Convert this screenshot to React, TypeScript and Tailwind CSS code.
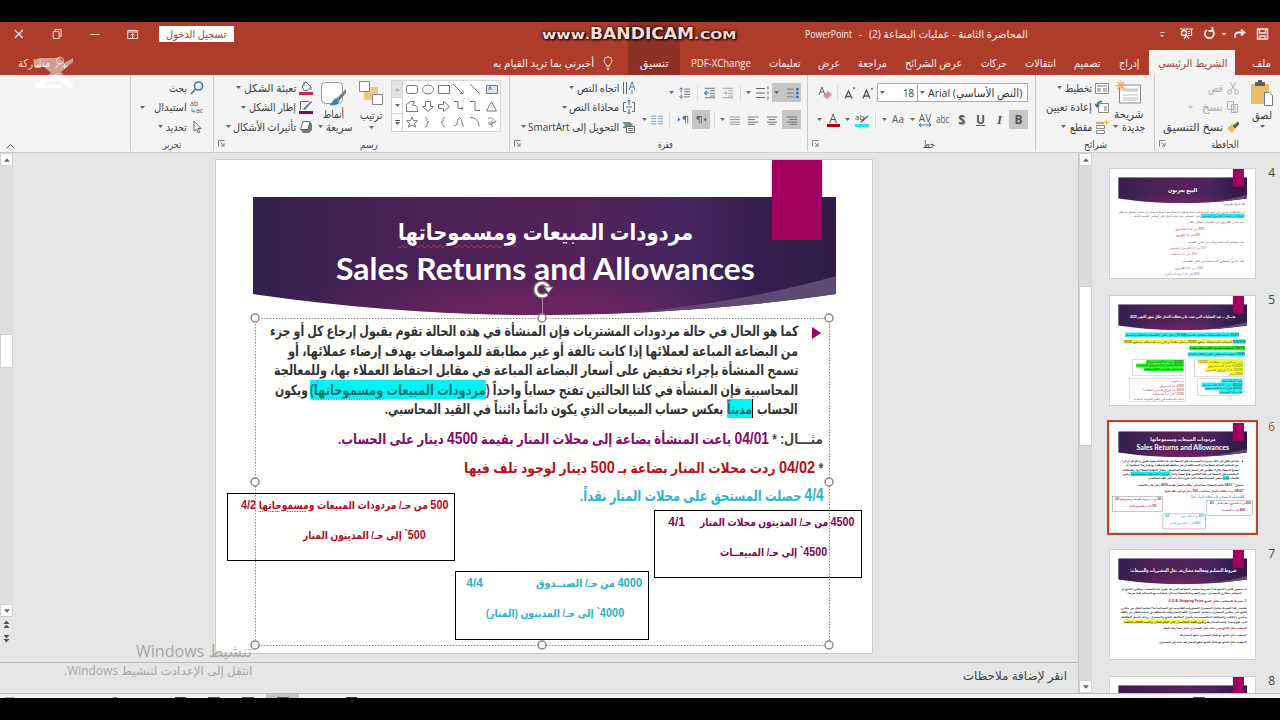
import { useLayoutEffect, useRef } from 'react';
import type { ReactNode } from 'react';

// One line of text, stretched to exactly fill the width of its box
const Fit = ({ className = '', children }: { className?: string; children: ReactNode }) => {
	const box = useRef<HTMLSpanElement>(null);
	const text = useRef<HTMLSpanElement>(null);

	useLayoutEffect(() => {
		if (!box.current || !text.current) return;
		text.current.style.transform = `scaleX(${box.current.clientWidth / text.current.offsetWidth})`;
	}, []);

	return (
		<span ref={box} className={`block shrink-0 ${className}`}>
			<span ref={text} className="inline-block origin-right whitespace-nowrap">
				{children}
			</span>
		</span>
	);
};

// Latin digits are set a little larger than the Arabic around them
const Num = ({ children }: { children: ReactNode }) => <span className="text-[1.18em] leading-none">{children}</span>;

const Caret = ({ className = '' }: { className?: string }) => (
	<svg viewBox="0 0 5 3" className={`h-[3px] w-[5px] shrink-0 fill-[#666] ${className}`}>
		<path d="M0 0h5L2.500 3z" />
	</svg>
);

const Icon = ({ className = '', children }: { className?: string; children: ReactNode }) => (
	<svg viewBox="0 0 14 14" className={`h-3.5 w-3.5 shrink-0 fill-none stroke-[#666] ${className}`}>
		{children}
	</svg>
);

const Divider = ({ className = '' }: { className?: string }) => (
	<div className={`flex shrink-0 justify-center ${className}`}>
		<div className="h-4 w-px bg-[#dcdcdc]" />
	</div>
);

const Cell = ({ className = '', children }: { className?: string; children: ReactNode }) => (
	<div className={`flex h-[19px] shrink-0 items-center justify-center ${className}`}>{children}</div>
);

const Group = ({
	label,
	labelWidth,
	launcher = true,
	className = '',
	children,
}: {
	label: string;
	labelWidth: string;
	launcher?: boolean;
	className?: string;
	children: ReactNode;
}) => (
	<div className={`flex h-[76px] shrink-0 flex-col border-l border-[#c9c9cb] ${className}`}>
		<div className="flex h-[61px] pt-[3px]">{children}</div>
		<div className="flex h-[15px] items-center">
			<div className="flex flex-1 justify-center">
				<Fit className={`text-[10px] leading-[14px] text-[#444] ${labelWidth}`}>{label}</Fit>
			</div>
			{launcher && (
				<Icon className="me-1 ms-[3px] !h-[7px] !w-[7px] [stroke-width:1.6]">
					<path d="M1 13V1h12M5 5l7 7M12 6v6H6" />
				</Icon>
			)}
		</div>
	</div>
);

const Item = ({
	icon,
	width,
	caret,
	muted,
	children,
}: {
	icon: ReactNode;
	width: string;
	caret?: string;
	muted?: boolean;
	children: ReactNode;
}) => (
	<div className="flex h-[19.5px] items-center">
		{icon}
		<Fit className={`ms-[3px] text-[11px] leading-[18px] ${muted ? 'text-[#aaa]' : 'text-[#3c3c3c]'} ${width}`}>
			{children}
		</Fit>
		{caret && <Caret className={caret} />}
	</div>
);

const TitleBar = () => (
	<div className="flex h-7 shrink-0 items-center">
		<svg viewBox="0 0 128 16" className="h-4 w-[128px] shrink-0 fill-none stroke-[#fbe9e5] [stroke-width:1.4]">
			<path d="M105.500 3h10v10h-10zM107.500 3v4h6V3M108 13v-3h5v3" />
			<path d="M92 6.500h-6a3 3 0 0 0-3 3v2M89 3.500l3.500 3-3.500 3" strokeWidth="1.8" />
			<path d="M69.500 7h5L72 9.500z" fill="#fbe9e5" stroke="none" />
			<path d="M60.500 4.500a4.500 4.500 0 1 1-5.500-.6M60.500 1v4h-4" strokeWidth="1.8" />
			<path d="M28 3h13M39.500 3.500v6h-4M32 13l2.500-3.500L37 13" strokeWidth="1.2" />
			<circle cx="32" cy="7" r="2.500" />
			<path d="M36 5.500h2M36 7.500h2" strokeWidth="1" />
			<path d="M8 9h4l-2 2z" fill="#fbe9e5" stroke="none" />
			<path d="M8.500 6.500h4" strokeWidth="1" />
		</svg>
		<div className="ms-[124px] flex shrink-0 text-[11px] leading-[18px] text-[#fdf0ed]">
			<Fit className="w-[159px]">المحاضرة الثامنة - عمليات البضاعة (2)</Fit>
			<span className="w-[17px] text-center">-</span>
			<Fit className="w-[47px]">PowerPoint</Fit>
		</div>
		<div className="ms-[571px] flex h-4 w-[75px] shrink-0 items-center justify-center bg-white text-[#9c4a3c]">
			<Fit className="w-[60px] text-[11px] leading-4">تسجيل الدخول</Fit>
		</div>
		<svg viewBox="0 0 160 16" className="h-4 w-[159px] shrink-0 fill-none stroke-[#fbe9e5]">
			<path d="M128.500 4.500h10v8h-10zM128.500 6h10M133.500 12V8M131.500 9.500l2-2 2 2" />
			<path d="M91 8.500h9" />
			<path d="M53.500 5.500h6v7h-6zM55.500 5V3.500h6v7H60" />
			<path d="M15 4l8 8M23 4l-8 8" strokeWidth="1.200" />
		</svg>
	</div>
);

const TABS = [
	['إدراج', 'w-10', 'w-5'],
	['تصميم', 'w-[43px]', 'w-[27px]'],
	['انتقالات', 'w-[51px]', 'w-[31px]'],
	['حركات', 'w-[42px]', 'w-[26px]'],
	['عرض الشرائح', 'w-[79px]', 'w-[57px]'],
	['مراجعة', 'w-[43px]', 'w-[29px]'],
	['عرض', 'w-11', 'w-[22px]'],
	['تعليمات', 'w-[45px]', 'w-[31px]'],
	['PDF-XChange', 'w-[82px]', 'w-[60px]'],
	['تنسيق', 'w-[52px]', 'w-[29px]'],
];

const Tabs = () => (
	<div className="flex h-[25px] shrink-0 items-center text-[11px] leading-[18px] text-[#fdeeea]">
		<div className="flex w-[38px] shrink-0 justify-center">
			<Fit className="w-[19px]">ملف</Fit>
		</div>
		<div className="ms-[7px] flex h-[25px] w-[86px] shrink-0 items-center justify-center bg-[#f4f4f5] text-[#a3493a]">
			<Fit className="w-[70px]">الشريط الرئيسي</Fit>
		</div>
		{TABS.map(([label, cell, text]) => (
			<div key={label} className={`flex shrink-0 justify-center ${cell}`}>
				<Fit className={text}>{label}</Fit>
			</div>
		))}
		<svg viewBox="0 0 10 14" className="ms-[15px] h-3.5 w-2.5 shrink-0 fill-none stroke-[#fdeeea]">
			<path d="M3.500 10C3.500 8 1 7.500 1 4.800a4 4 0 0 1 8 0C9 7.500 6.500 8 6.500 10zM3.500 12h3M4 13.500h2" />
		</svg>
		<Fit className="ms-[9px] w-[101px]">أخبرني بما تريد القيام به</Fit>
		<svg viewBox="0 0 12 14" className="ms-[426px] h-3.5 w-3 shrink-0 fill-none stroke-[#f3c9c0]">
			<circle cx="5" cy="4.500" r="3.500" />
			<path d="M1 13c0-3 1.500-4.500 4-5M7 10.500h5M9.500 8v5" />
		</svg>
		<Fit className="ms-1 w-[33px] text-[#f6d5cd]">مشاركة</Fit>
	</div>
);

const Clipboard = () => (
	<Group label="الحافظة" labelWidth="w-[28px]" className="w-[126px]">
		<div className="flex w-10 flex-col items-center pe-1 pt-0.5">
			<svg viewBox="0 0 24 28" className="h-7 w-6">
				<path d="M1 4h18v20H1z" fill="#e9bf6d" />
				<path d="M5 2h3V0h4v2h3v4H5z" fill="#5f5f5f" />
				<path d="M14.500 12.500h5l3 3v10h-8z" fill="#fff" stroke="#777" />
			</svg>
			<Fit className="w-5 text-[11px] leading-[14px] text-[#3c3c3c]">لصق</Fit>
			<Caret className="mt-[3px]" />
		</div>
		<div>
			<Item muted width="w-[15px]" icon={<Icon className="!stroke-[#b0b0b0]"><path d="M4 1l5 8M10 1L5 9" /><circle cx="3.500" cy="11" r="2" /><circle cx="10.500" cy="11" r="2" /></Icon>}>قص</Item>
			<Item muted width="w-[21px]" caret="ms-[9px] opacity-40" icon={<Icon className="!stroke-[#b0b0b0]"><path d="M1.500 1.500h6v8h-6zM5.500 4.500h6v8h-6zM7 7h3M7 9h3M7 11h3" /></Icon>}>نسخ</Item>
			<Item width="w-[60px]" icon={<Icon><path d="M1 8l5-4 4 4-4 5z" fill="#e9bf6d" stroke="none" /><path d="M7 6l5-4 1 2-4 4z" fill="#555" /></Icon>}>نسخ التنسيق</Item>
		</div>
	</Group>
);

const Slides = () => (
	<Group label="شرائح" labelWidth="w-[23px]" launcher={false} className="w-[119px]">
		<div className="flex w-[45px] flex-col items-center pt-0.5 ps-[5px]">
			<svg viewBox="0 0 26 26" className="h-[27px] w-[26px]">
				<path d="M3.500 4.500h21v18h-21z" fill="#fff" stroke="#888" />
				<path d="M6 8h16v3H6z" fill="#ccc" />
				<path d="M7 14.500h15M7 17.500h15M7 19.500h15" stroke="#bbb" fill="none" />
				<path d="M5 0v10M0 5h10M1.500 1.500l7 7M8.500 1.500l-7 7" stroke="#e2b35b" strokeWidth="1.300" />
			</svg>
			<Fit className="w-[29px] text-[11px] leading-[13px] text-[#3c3c3c]">شريحة</Fit>
			<div className="flex items-center">
				<Fit className="w-[23px] text-[11px] leading-[13px] text-[#3c3c3c]">جديدة</Fit>
				<Caret className="ms-1" />
			</div>
		</div>
		<div>
			<Item width="w-[27px]" caret="ms-[3px]" icon={<Icon><path d="M.5 2.500h13v10H.5z" fill="#fff" stroke="#888" /><path d="M2 4h10v2H2zM2 7h4v4H2zM8 7h4v4H8z" fill="#bbb" stroke="none" /></Icon>}>تخطيط</Item>
			<Item width="w-[46px]" icon={<Icon><path d="M3.500 3.500h10v9h-10z" fill="#fff" stroke="#888" /><path d="M9 6h3v5H9z" fill="#bbb" stroke="none" /><path d="M2 6c0-3 2-4.500 5-4.500M0 4l2 3 2.500-2" stroke="#2f6fb0" strokeWidth="1.400" /></Icon>}>إعادة تعيين</Item>
			<Item width="w-[22px]" caret="ms-1" icon={<Icon><path d="M1.500 5.500h8v3h-8zM1.500 10.500h8v3h-8z" fill="#fff" stroke="#888" /><path d="M1 3h8" stroke="#c98a4a" strokeWidth="1.500" /><path d="M11.500 0v5M9 2.500h5" stroke="#e2b35b" /></Icon>}>مقطع</Item>
		</div>
	</Group>
);

const FontGroup = () => (
	<Group label="خط" labelWidth="w-[12px]" className="w-[228px]">
		<div className="flex flex-col ps-[7px] pt-[5px] text-[#555]">
			<div className="flex items-center">
				<div className="flex h-[19px] w-[111px] items-center border border-[#ababab] bg-white ps-[5px] text-[#333]">
					<Fit className="w-[94px] text-[11.5px] leading-[17px]">(النص الأساسي) Arial</Fit>
					<Caret className="ms-[3px]" />
				</div>
				<div className="flex h-[19px] w-10 items-center border border-r-0 border-[#ababab] bg-white ps-[3px] text-[11.5px] text-[#333]">
					<Fit className="w-[11px] leading-[17px]">18</Fit>
					<Caret className="ms-[18px]" />
				</div>
				<Cell className="w-[19px]">
					<svg viewBox="0 0 12 14" className="h-3.5 w-3 fill-none stroke-[#555] [stroke-width:1.3]"><path d="M1 12.500L4.500 4 8 12.500M2 10h5" /><path d="M8.500 3.500l1.500-2 1.500 2z" fill="#555" stroke="none" /></svg>
				</Cell>
				<Cell className="w-[17px]">
					<svg viewBox="0 0 12 14" className="h-3.5 w-3 fill-none stroke-[#555] [stroke-width:1.3]"><path d="M1 12.500L4.500 5 8 12.500M2 10.500h5" /><path d="M8.500 1.500l1.500 2 1.500-2z" fill="#555" stroke="none" /></svg>
				</Cell>
				<Divider className="w-2" />
				<Cell className="w-4">
					<Icon><path d="M1 9L4 1l3 8M2 6h4" /><path d="M5 10l5-5 4 3.500L9 13z" fill="#e58a9f" stroke="none" /></Icon>
				</Cell>
			</div>
			<div className="mt-2 flex items-center font-['Open_Sans',sans-serif] text-[12px]">
				<Cell className="w-[19px] bg-[#c6c6c6] font-bold">B</Cell>
				<Cell className="w-[19px] font-['Liberation_Serif',serif] text-[13px] font-bold italic">I</Cell>
				<Cell className="w-[19px] font-bold underline">U</Cell>
				<Cell className="w-[19px] font-bold [text-shadow:1px_1px_1px_#999]">S</Cell>
				<Cell className="w-[19px]"><Fit className="w-[13px] text-[10px] line-through">abc</Fit></Cell>
				<Cell className="w-4">
					<div className="flex flex-col items-center text-[10px] leading-[10px]">AV<svg viewBox="0 0 12 4" className="h-1 w-3 fill-none stroke-[#3d7ab8]"><path d="M0 2h12M2 0L0 2l2 2M10 0l2 2-2 2" /></svg></div>
				</Cell>
				<Cell className="w-2.5"><Caret /></Cell>
				<Cell className="w-[18px]"><Fit className="w-3 text-[10px]">Aa</Fit></Cell>
				<Cell className="w-2.5"><Caret /></Cell>
				<Divider className="w-2" />
				<Cell className="w-[18px]">
					<div dir="ltr" className="relative h-[15px] w-3.5 border-b-[3px] border-[#20e8ef] text-[8px] leading-[9px]">
						ab
						<svg viewBox="0 0 14 12" className="absolute left-0 top-0 h-3 w-3.5 fill-none stroke-[#555]"><path d="M6 10l7-6" strokeWidth="1.600" /></svg>
					</div>
				</Cell>
				<Cell className="w-[11px]"><Caret /></Cell>
				<Cell className="w-[18px]">
					<div className="w-[13px] border-b-[3px] border-[#b8000c] text-center text-[12px] leading-[11px]">A</div>
				</Cell>
				<Cell className="w-2.5"><Caret /></Cell>
			</div>
		</div>
	</Group>
);

const Paragraph = () => (
	<Group label="فقرة" labelWidth="w-[15px]" className="w-[298px]">
		<div className="flex w-[168px] flex-col ps-[6px] pt-[5px]">
			<div className="flex items-center">
				<Cell className="w-[29px] gap-2 bg-[#c6c6c6]">
					<Icon className="!w-3"><path d="M0 2.500h8M0 7h8M0 11.500h8" /><path d="M11 1.500h2v2h-2zM11 6h2v2h-2zM11 10.500h2v2h-2z" fill="#2f6fb0" stroke="#2f6fb0" /></Icon>
					<Caret />
				</Cell>
				<Cell className="w-[19px]"><Icon><path d="M0 2.500h9M0 7h9M0 11.500h9M12 .5v3M12 5.500v3M12 10.500v3" /></Icon></Cell>
				<Cell className="w-2.5"><Caret /></Cell>
				<Divider className="w-1.5" />
				<Cell className="w-[18px]"><Icon className="!w-3 !stroke-[#999]"><path d="M1 1.500h12M7 4.500h6M7 7.500h6M7 10.500h6M1 12.500h12M1 7h5M4 5l2 2-2 2" /></Icon></Cell>
				<Cell className="w-[19px]"><Icon className="!w-3"><path d="M1 1.500h12M7 4.500h6M7 7.500h6M7 10.500h6M1 12.500h12" /><path d="M1 7h5M3 4.500L1 7l2 2.500" stroke="#2f6fb0" strokeWidth="1.300" /></Icon></Cell>
				<Divider className="w-1.5" />
				<Cell className="w-[18px]"><Icon className="!w-3"><path d="M6 2.500h7M6 5.500h7M6 8.500h7M6 11.500h7" /><path d="M2.500 1v5M.5 3l2-2 2 2M2.500 8v5M.5 11l2 2 2-2" stroke="#2f6fb0" /></Icon></Cell>
				<Cell className="w-2.5"><Caret /></Cell>
			</div>
			<div className="mt-2 flex items-center">
				<Cell className="w-[19px] bg-[#c6c6c6]"><Icon className="!w-3"><path d="M1 3.500h12M4 6.500h9M1 9.500h12M4 12h9" /></Icon></Cell>
				<Cell className="w-5"><Icon className="!w-3"><path d="M1 3.500h12M3 6.500h8M1 9.500h12M3 12h8" /></Icon></Cell>
				<Cell className="w-[18px]"><Icon className="!w-3"><path d="M1 3.500h12M1 6.500h8M1 9.500h12M1 12h8" /></Icon></Cell>
				<Cell className="w-[18px]"><Icon className="!w-3 !stroke-[#888]"><path d="M1 3.500h12M1 6.500h12M1 9.500h12M1 12h12" /></Icon></Cell>
				<Cell className="w-2"><Caret /></Cell>
				<Divider className="w-2" />
				<Cell className="w-[18px] bg-[#c6c6c6]"><Icon className="!w-3"><path d="M3 3h5M5 3v8M7.500 3v8" /><path d="M4 2.500a2 2 0 0 0 0 4z" fill="#555" /><path d="M13 4v5l-3-2.500z" fill="#2f6fb0" stroke="none" /></Icon></Cell>
				<Cell className="w-[19px]"><Icon className="!w-3"><path d="M8 3h5M10 3v8M12.500 3v8" /><path d="M9 2.500a2 2 0 0 0 0 4z" fill="#555" /><path d="M1 4v5l3-2.500z" fill="#2f6fb0" stroke="none" /></Icon></Cell>
				<Divider className="w-2" />
				<Cell className="w-4"><Icon className="!w-3 !stroke-[#6a9bc4]"><path d="M0 2.500h6M8 2.500h6M0 5.500h6M8 5.500h6M0 8.500h6M8 8.500h6M0 11.500h6M8 11.500h6" /></Icon></Cell>
				<Cell className="w-2.5"><Caret /></Cell>
			</div>
		</div>
		<div className="ps-[3px]">
			<Item width="w-[42px]" caret="ms-[3px]" icon={<Icon><path d="M1.500 1v12M4.500 1v12" /><path d="M7 9l3-8 3 8M8 6h4M10 9v4" stroke="#4d7ea8" /></Icon>}>اتجاه النص</Item>
			<Item width="w-[50px]" caret="ms-[2px]" icon={<Icon><path d="M4 2.500H1.500v9H4M10 2.500h2.500v9H10M4 7h6" /><path d="M7 0v5M5.500 1.500L7 0l1.500 1.500M7 9v5M5.500 12.500L7 14l1.500-1.500" stroke="#2f6fb0" /></Icon>}>محاذاة النص</Item>
			<Item width="w-[91px]" caret="ms-[2px]" icon={<Icon><path d="M0 2h8l3 3-3 3H0l3-3z" fill="#5c9f86" stroke="none" /><path d="M4.500 6.500h8v6h-8zM6 8.500h5M6 10.500h5" fill="#fff" /></Icon>}>التحويل إلى SmartArt</Item>
		</div>
	</Group>
);

const Shapes = () => (
	<div className="mt-0.5 flex h-[52px] w-[110px] shrink-0 border border-[#d5d5d7] bg-white">
		<svg viewBox="0 0 97 50" className="h-[50px] w-[97px] fill-none stroke-[#777]">
			<path d="M83.500 4.500h11v8h-11z" className="fill-[#dfe6f2]" />
			<path d="M85.500 9l1.500-3.500L88.500 9" stroke="#4d7ea8" />
			<path d="M67 3l10 10M50 3l10 10M57 12.500h3v-3M35.500 4.500h11v8h-11z" />
			<ellipse cx="25" cy="8.500" rx="5.500" ry="4.500" />
			<rect x="3.500" y="4.500" width="11" height="8" rx="2" />
			<path d="M83.500 30l5-9.500 5 9.500zM67 20.500h5v9h5M51 20.500h4v7h5M58 25.500l2 2-2 2M35.500 23.500h5v-3l6 5-6 5v-3h-5zM22.500 20.500h5v5h3l-5.500 5-5.500-5h3zM3.500 30.500v-7l4-3h4l-2 4c4-1 5 2 5 6z" />
			<path d="M85 38c3-3 7 0 4 2s3 2 4 0-5 6-7 3 4-1 3 3M67 36.500c6 0 9 4 9 9M51 44c4 4 3-9 6-7s1 8 4 8M42 36.500c-4 0 0 4-4 4.500 4 .5 0 5 4 5M22 36.500c4 0 0 4 4 4.500-4 .5 0 5-4 5M9 36l1.500 3.500 4 .2-3 2.500 1 4L9 44l-3.500 2.200 1-4-3-2.500 4-.2z" />
		</svg>
		<div className="flex w-[11px] flex-col divide-y divide-[#d5d5d7] border-r border-[#d5d5d7]">
			<div className="flex h-[17px] items-center justify-center bg-[#e3e3e5]"><Caret className="rotate-180 opacity-40" /></div>
			<div className="flex h-4 items-center justify-center"><Caret /></div>
			<div className="flex h-[17px] flex-col items-center justify-center gap-px"><div className="h-px w-[5px] bg-[#555]" /><Caret /></div>
		</div>
	</div>
);

const Drawing = () => (
	<Group label="رسم" labelWidth="w-[18px]" className="w-[296px]">
		<div className="ps-2">
			<Shapes />
		</div>
		<div className="flex w-10 flex-col items-center pt-[3px]">
			<svg viewBox="0 0 24 24" className="h-6 w-6">
				<path d="M5 6h14v13H5z" fill="#e9c983" />
				<path d="M.5.5h10v10H.5zM13.500 13.500h10v10h-10z" fill="#fff" stroke="#888" />
			</svg>
			<Fit className="mt-0.5 w-[22px] text-[11px] leading-4 text-[#3c3c3c]">ترتيب</Fit>
			<Caret className="mt-[3px]" />
		</div>
		<div className="flex w-[35px] flex-col items-center pt-[3px]">
			<svg viewBox="0 0 26 26" className="h-[26px] w-[26px]">
				<rect x=".5" y="1.500" width="21" height="21" rx="4" fill="#fff" stroke="#999" />
				<path d="M25 8l-9 9 2 3 7-8z" fill="#7a7a7a" />
				<path d="M16 17c-4 0-4 5-8 7 5 1 10 0 10-4z" fill="#3f7fb5" />
			</svg>
			<Fit className="w-[21px] text-[11px] leading-[13px] text-[#3c3c3c]">أنماط</Fit>
			<div className="-ms-1 flex items-center">
				<Fit className="w-[27px] text-[11px] leading-[13px] text-[#3c3c3c]">سريعة</Fit>
				<Caret className="ms-[3px]" />
			</div>
		</div>
		<div className="ps-[3px]">
			<Item width="w-[52px]" caret="ms-[3px]" icon={<Icon><path d="M3 5l4-4 5 5-4 3.500H5zM5 1v4M12 6v3" fill="#fff" /><path d="M0 11h14v3H0z" fill="#c2265f" stroke="none" /></Icon>}>تعبئة الشكل</Item>
			<Item width="w-[47px]" caret="ms-[3px]" icon={<Icon><path d="M1.500 10V1.500H10" /><path d="M4 9l8-8 1 1-7 8z" fill="#3f7fb5" stroke="none" /><path d="M0 11h14v3H0z" fill="#8e0a52" stroke="none" /></Icon>}>إطار الشكل</Item>
			<Item width="w-[63px]" caret="ms-[2px]" icon={<Icon><path d="M2 10l2 3h6l3-3V4l-2-2z" fill="#777" stroke="none" /><path d="M4 1.500h7l-2 8H1.500z" fill="#fff" /></Icon>}>تأثيرات الأشكال</Item>
		</div>
	</Group>
);

const Editing = () => (
	<Group label="تحرير" labelWidth="w-[18px]" launcher={false} className="w-[83px]">
		<div className="ps-[9px]">
			<Item width="w-[18px]" icon={<Icon className="!stroke-[#3b7ab5] [stroke-width:1.6]"><circle cx="8.500" cy="5" r="4" /><path d="M5.500 8L1 13" /></Icon>}>بحث</Item>
			<Item width="w-[33px]" caret="ms-[9px]" icon={<div className="w-3.5 text-left text-[7px] leading-[7px] text-[#555]" dir="ltr">ab<br /><span className="text-[#3b7ab5]">↳</span>ac</div>}>استبدال</Item>
			<Item width="w-[21px]" caret="ms-[3px]" icon={<Icon><path d="M4 1v10l2.500-2 2 4 1.500-1-2-3.500H11z" fill="#fff" /></Icon>}>تحديد</Item>
		</div>
	</Group>
);

const Ribbon = () => (
	<div className="flex h-[78px] shrink-0 border-b border-[#cfcfd0] bg-[#f4f4f5]">
		<Clipboard />
		<Slides />
		<FontGroup />
		<Paragraph />
		<Drawing />
		<Editing />
		<div className="flex flex-1 items-end justify-end pb-[3px] pe-1.5">
			<svg viewBox="0 0 9 5" className="h-[5px] w-[9px] fill-none stroke-[#555]"><path d="M.5 4.500l4-4 4 4" /></svg>
		</div>
	</div>
);

const Banner = ({ id }: { id: string }) => (
	<>
		<svg viewBox="0 0 583 118" className="absolute left-[37px] top-[37px] h-[118px] w-[583px]">
			<defs>
				<linearGradient id={`${id}-base`}>
					<stop offset="0" stopColor="#35204f" />
					<stop offset="0.300" stopColor="#4b2156" />
					<stop offset="0.550" stopColor="#54225a" />
					<stop offset="0.720" stopColor="#472560" />
					<stop offset="0.880" stopColor="#351d4f" />
					<stop offset="1" stopColor="#301b47" />
				</linearGradient>
				<radialGradient id={`${id}-glow`} cx="0.480" cy="1" r="0.420">
					<stop offset="0" stopColor="#6f2461" />
					<stop offset="1" stopColor="#6f2461" stopOpacity="0" />
				</radialGradient>
			</defs>
			<path d="M0 0h583v97Q291 139 0 97z" fill={`url(#${id}-base)`} />
			<path d="M0 0h583v97Q291 139 0 97z" fill={`url(#${id}-glow)`} />
			<path d="M583 79v18Q490 111 385 115Q500 103 583 79z" fill="#5f4a74" />
		</svg>
		<div className="absolute left-[556px] top-0 h-20 w-[50px] bg-[#a3005f] shadow-[0_1px_2px_#3338]" />
	</>
);

const LINE = 'absolute leading-5';

const ReturnsSlide = ({ id }: { id: string }) => (
	<div className="font-['Liberation_Sans','DejaVu_Sans',sans-serif]">
		<Banner id={id} />
		<Fit className="absolute right-[179px] top-[56px] w-[295px] text-[22px] font-bold leading-[34px] text-white">
			مردودات المبيعات <span className="underline decoration-[#d0304f] decoration-wavy decoration-1 underline-offset-4">ومسموحاتها</span>
		</Fit>
		<Fit className="absolute right-[117px] top-[90px] w-[419px] font-['Lato',sans-serif] text-[30px] font-bold leading-9 text-white">
			Sales Returns and Allowances
		</Fit>
		<svg viewBox="0 0 9 12" className="absolute left-[596px] top-[167px] h-3 w-[9px] fill-[#a3005f]"><path d="M0 0l9 6-9 6z" /></svg>
		<div className="text-[14px] font-bold text-[#333]">
			<Fit className={`${LINE} right-[74px] top-[161px] w-[528px]`}>كما هو الحال في حالة مردودات المشتريات فإن المنشأة في هذه الحالة تقوم بقبول إرجاع كل أو جزء</Fit>
			<Fit className={`${LINE} right-[74px] top-[181px] w-[510px]`}>من البضاعة المباعة لعملائها إذا كانت تالفة أو غير مطابقة للمواصفات بهدف إرضاء عملائها، أو</Fit>
			<Fit className={`${LINE} right-[74px] top-[200px] w-[524px]`}>تسمح المنشأة بإجراء تخفيض على أسعار البضاعة المباعة في مقابل احتفاظ العملاء بها، وللمعالجة</Fit>
			<div className={`${LINE} right-[74px] top-[220px] flex`}>
				<Fit className="w-[312px]">المحاسبية فإن المنشأة في كلتا الحالتين تفتح حساباً واحداً (</Fit>
				<Fit className="h-[19px] w-[176px] bg-[#00f3f5] text-[#20706f]">مردودات المبيعات <span className="underline decoration-dotted decoration-1 underline-offset-4">ومسموحاتها</span>)</Fit>
				<Fit className="ms-[2px] w-[33px]">ويكون</Fit>
			</div>
			<div className={`${LINE} right-[74px] top-[239px] flex`}>
				<Fit className="w-[41px]">الحساب</Fit>
				<Fit className="ms-1 h-[19px] w-[26px] border-r border-black bg-[#00f3f5] text-[#20706f]">مديناً</Fit>
				<Fit className="ms-1 w-[338px]">بعكس حساب المبيعات الذي يكون دائماً دائنناً في القيد المحاسبي.</Fit>
			</div>
			<Fit className={`${LINE} right-[49px] top-[269px] w-[485px] text-[#870a66]`}>
				<span className="text-[#444]">مثـــال: * </span><Num>04/01</Num> باعت المنشأة بضاعة إلى محلات المنار بقيمة <Num>4500</Num> دينار على الحساب.
			</Fit>
			<Fit className={`${LINE} right-[49px] top-[298px] w-[359px] text-[#b8101c]`}>
				<span className="text-[#444]">* </span><Num>04/02</Num> ردت محلات المنار بضاعة بـ <Num>500</Num> دينار لوجود تلف فيها
			</Fit>
			<Fit className={`${LINE} right-[49px] top-[326px] w-[243px] text-[15px] text-[#2fb4cf]`}><Num>4/4</Num> حصلت المستحق على محلات المنار نقداً.</Fit>
		</div>
		<div className="absolute left-[11px] top-[333px] flex h-[68px] w-[228px] flex-col gap-2.5 border border-black pt-px text-[11px] font-bold leading-5 text-[#b00d25]">
			<Fit className="ms-1.5 w-[207px]"><Num>500</Num> من حـ/ مردودات المبيعات <span className="underline decoration-dotted decoration-1 underline-offset-2">ومسموحاتها</span> <Num>4/2</Num></Fit>
			<Fit className="ms-7 w-[123px]"><Num>500`</Num> إلى حـ/ المدينون المنار</Fit>
		</div>
		<div className="absolute left-[438px] top-[350px] flex h-[68px] w-[208px] flex-col gap-2.5 border border-black pt-px text-[11px] font-bold leading-5 text-[#7b0c55]">
			<div className="flex">
				<Fit className="ms-1.5 w-[155px]"><Num>4500</Num> من حـ/ المدينون محلات المنار</Fit>
				<Fit className="ms-[15px] w-[17px] text-xs leading-5">4/1</Fit>
			</div>
			<Fit className="ms-[34px] w-[107px]"><Num>4500`</Num> إلى حـ/ المبيعــات</Fit>
		</div>
		<div className="absolute left-[239px] top-[411px] flex h-[69px] w-[194px] flex-col gap-2.5 border border-black pt-px text-[11px] font-bold leading-5 text-[#2fb0c8]">
			<div className="flex">
				<Fit className="ms-1.5 w-[106px]"><Num>4000</Num> من حـ/ الصنــدوق</Fit>
				<Fit className="ms-[53px] w-[17px] text-xs leading-5">4/4</Fit>
			</div>
			<Fit className="ms-6 w-[138px]"><Num>4000`</Num> إلى حـ/ المدينون (المنار)</Fit>
		</div>
	</div>
);

const HANDLES = [[39, 158], [326, 158], [613, 158], [39, 322], [613, 322], [39, 485], [326, 485], [613, 485]];

const Selection = () => (
	<svg viewBox="0 0 656 493" className="absolute inset-0 h-[493px] w-[656px] overflow-visible fill-none stroke-[#8a8a8a]">
		<path d="M39 158.500h574M39.500 158v327M613.500 158v327M39 485.500h574" strokeDasharray="1.500 1.500" />
		<path d="M326.500 136v17" stroke="#a89" />
		{HANDLES.map(([x, y]) => (
			<circle key={`${x}-${y}`} cx={x} cy={y} r="4" fill="#fff" strokeWidth="1.500" />
		))}
		<path d="M331 134a6.500 6.500 0 1 1 1.500-6" stroke="#777" strokeWidth="5" />
		<path d="M331 134a6.500 6.500 0 1 1 1.500-6" stroke="#fff" strokeWidth="2.500" />
		<path d="M328 127h9l-4.500 6z" fill="#fff" stroke="#777" />
	</svg>
);

const Workspace = () => (
	<div className="relative h-[509px] shrink-0 pt-[7px]">
		<div className="me-[204px] ms-[206px]">
			<div className="relative h-[493px] w-[656px] bg-[#fffffd] outline outline-1 outline-[#cccccc]">
				<ReturnsSlide id="main" />
				<Selection />
			</div>
		</div>
	</div>
);

const CreditSlide = () => (
	<>
		<Banner id="credit" />
		<Fit className="absolute right-[262px] top-[72px] w-[132px] text-[26px] font-bold leading-10 text-white">البيع بعربون</Fit>
		<div className="text-[14px] leading-5 text-[#666]">
			<Fit className="absolute right-[48px] top-[150px] w-[100px]">◄ البيع بعربون:</Fit>
			<Fit className="absolute right-[48px] top-[182px] w-[570px]">إذا دفع العميل عربون على قيمة البضاعة قبل استلامها فإن المنشأة تثبت المبلغ المستلم في حساب مستقل ثم تقفل</Fit>
			<Fit className="absolute right-[48px] top-[202px] w-[195px] bg-[#19eef0]">المبلغ من حساب العربون المقبوض</Fit>
			<Fit className="absolute right-[243px] top-[202px] w-[305px]">وعند التسليم يتم إثبات البيع على أساس القيمة كاملة</Fit>
			<Fit className="absolute right-[48px] top-[231px] w-[260px]">عند قبض العربون من العميل يسجل القيد:</Fit>
			<Fit className="absolute right-[230px] top-[259px] w-[130px] text-[#923]">XXX من حـ/ الصندوق</Fit>
			<Fit className="absolute right-[250px] top-[289px] w-[108px] text-[#923]">XXX إلى حـ/ العربون</Fit>
			<Fit className="absolute right-[48px] top-[318px] w-[255px]">عند تسليم البضاعة وتحصيل باقي القيمة</Fit>
			<Fit className="absolute right-[222px] top-[348px] w-[165px] text-[#b57]">XXX من حـ/ العربون المقبوض</Fit>
			<Fit className="absolute right-[262px] top-[376px] w-[122px] text-[#b57]">XXX` إلى حـ/ المبيعات</Fit>
			<Fit className="absolute right-[48px] top-[406px] w-[280px]">عند عدم استلام البضاعة من قبل العميل</Fit>
			<Fit className="absolute right-[235px] top-[436px] w-[128px] text-[#858]">XXX من حـ/ العربون</Fit>
			<Fit className="absolute right-[252px] top-[465px] w-[160px] text-[#858]">XXX إلى حـ/ إيرادات أخرى</Fit>
		</div>
	</>
);

const ExampleSlide = () => (
	<>
		<Banner id="example" />
		<Fit className="absolute right-[88px] top-[74px] w-[478px] text-[18px] font-bold leading-9 text-white">مثـــال — قيد العمليات التي تمت على محلات المنار خلال شهر أكتوبر 2020</Fit>
		<div className="text-[14px] font-bold leading-5 text-[#277]">
			<Fit className="absolute right-[72px] top-[165px] w-[516px] bg-[#19eef0]">10/01 باعت المنشأة بضاعة بقيمة 12,000 دينار على الحساب لمحلات المنار</Fit>
			<Fit className="absolute right-[42px] top-[196px] w-[60px] bg-[#19eef0]">10/05</Fit>
			<Fit className="absolute right-[102px] top-[196px] w-[492px] bg-[#f6f61c] text-[#775]">حصلت المنشأة مبلغ 5000 دينار نقداً وحررت كمبيالة بمبلغ 3000</Fit>
			<Fit className="absolute right-[46px] top-[226px] w-[250px] bg-[#26ee26] text-[#262]">10/15 حصلت قيمة الكمبيالة نقداً</Fit>
			<Fit className="absolute right-[46px] top-[254px] w-[258px] bg-[#19eef0]">10/20 حصلت المتبقي على محلات المنار</Fit>
		</div>
		<div className="absolute left-[380px] top-[288px] flex h-[75px] w-[230px] flex-col items-start border border-[#777] px-2 text-[13px] leading-[18px] text-[#664]">
			<Fit className="w-[205px] bg-[#f6f61c]">من مذكورين محلات 10/05</Fit>
			<Fit className="w-[160px] bg-[#f6f61c]">5000 حـ/ الصندوق</Fit>
			<Fit className="w-[170px] bg-[#f6f61c]">3000 حـ/ أوراق القبض</Fit>
			<Fit className="w-[60px] bg-[#f6f61c]">8000 دينار</Fit>
		</div>
		<div className="absolute left-[102px] top-[288px] flex h-[72px] w-[240px] flex-col items-start border border-[#777] px-2 text-[13px] leading-[17px] text-[#252]">
			<Fit className="w-[170px] bg-[#26ee26]">3000 من حـ/ الصندوق</Fit>
			<Fit className="w-[215px] bg-[#26ee26]">3000 إلى حـ/ أوراق القبض</Fit>
			<Fit className="w-[180px] bg-[#26ee26]">تحصيل قيمة الكمبيالة</Fit>
		</div>
		<div className="absolute left-[396px] top-[374px] flex h-[78px] w-[212px] flex-col items-start border border-[#777] px-2 text-[13px] leading-[17px] text-[#256]">
			<Fit className="w-[95px] bg-[#19eef0]">قيد التحصيل</Fit>
			<Fit className="w-[185px] bg-[#19eef0]">4000 من حـ/ الصندوق</Fit>
			<Fit className="w-[170px] bg-[#19eef0]">4000 إلى حـ/ المدينون</Fit>
			<Fit className="w-[105px] bg-[#19eef0]">تحصيل المتبقي</Fit>
		</div>
		<div className="absolute left-[88px] top-[374px] flex h-[105px] w-[255px] flex-col items-start border border-[#777] px-2 text-[13px] leading-5 text-[#923]">
			<Fit className="w-[60px]">من مذكورين</Fit>
			<Fit className="w-[110px]">4000 حـ/ الصندوق</Fit>
			<Fit className="w-[185px]">3000 حـ/ أوراق القبض (محلات)</Fit>
			<Fit className="w-[140px]">12000 إلى حـ/ المبيعات</Fit>
			<Fit className="w-[225px]">إثبات العملية في دفتر اليومية العامة</Fit>
		</div>
	</>
);

const DeliverySlide = () => (
	<>
		<Banner id="delivery" />
		<Fit className="absolute right-[84px] top-[72px] w-[482px] text-[21px] font-bold leading-10 text-white">شروط التسليم ومعالجة مصاريف نقل المشتريات والمبيعات:</Fit>
		<div className="text-[14px] font-bold leading-5 text-[#444]">
			<Fit className="absolute right-[38px] top-[164px] w-[565px]">◄ تتضمن فاتورة البيع عادة شروط تسليم البضاعة التي قد تكون عند التسليم بمخازن البائع أو</Fit>
			<Fit className="absolute right-[62px] top-[184px] w-[515px]">التسليم بمخازن المشتري، ومن الشروط المستخدمة في عمليات بيع البضاعة هما شرط:</Fit>
			<Fit className="absolute right-[38px] top-[220px] w-[355px] text-[#a22048]">1. شرط التسليم محل البيع F.O.B. Shipping Point:</Fit>
			<Fit className="absolute right-[36px] top-[250px] w-[572px]">يقتضي هذا الشرط بتحمل المشتري المسؤولية القانونية عن البضاعة أثناء عملية النقل من مخازن</Fit>
			<Fit className="absolute right-[36px] top-[270px] w-[572px]">البائع حتى مخازن المشتري، ويتحمل المشتري كافة المصروفات المتعلقة من عملية النقل من تكلفة</Fit>
			<Fit className="absolute right-[36px] top-[294px] w-[572px]">وتأمين وخلافه، والمعالجة المحاسبية يعد تحميل التكاليف البائع والمشتري، وذلك تحميل التكاليف</Fit>
			<Fit className="absolute right-[36px] top-[314px] w-[186px]">التي تقع وسداد قيمة المصاريف</Fit>
			<Fit className="absolute right-[222px] top-[314px] w-[372px] bg-[#f6f61c]">ويكون القيد المحاسبي على النحو التالي وحسب الحالات التالية:</Fit>
			<Fit className="absolute right-[38px] top-[343px] w-[380px] text-[#a22048]">التسليم محل البائع يعني يجب على المشتري تحمل مصاريف النقل</Fit>
			<Fit className="absolute right-[38px] top-[376px] w-[304px] text-[#a22048]">التسليم محل البائع مع قيام المشتري بدفع المصاريف</Fit>
			<Fit className="absolute right-[38px] top-[406px] w-[396px]">التسليم محل البائع مع قيام البائع بدفع المصاريف نيابة عن المشتري</Fit>
		</div>
	</>
);

const Thumb = ({ number, active, children }: { number: number; active?: boolean; children: ReactNode }) => (
	<div className="flex h-[127px] shrink-0">
		<div className={`-mt-[3px] w-[25px] pe-4 ps-[5px] text-[12px] leading-[14px] ${active ? 'text-[#c43e2b]' : 'text-[#444]'}`}>
			{number}
		</div>
		<div
			className={`relative h-[109px] w-[145px] overflow-hidden bg-white outline ${active ? 'outline-2 outline-offset-1 outline-[#b8442f]' : 'outline-1 outline-[#cfcfcf]'}`}
		>
			<div className="absolute right-0 top-0 h-[493px] w-[656px] origin-top-right scale-[0.221]">{children}</div>
		</div>
	</div>
);

const ScrollButton = ({ up }: { up?: boolean }) => (
	<div className="flex h-[13px] shrink-0 items-center justify-center border border-[#d0d0d0] bg-white">
		<Caret className={`!h-1 !w-1.5 ${up ? 'rotate-180' : ''}`} />
	</div>
);

const Statusbar = () => (
	<div className="flex h-[5px] shrink-0 items-end border-t border-[#bdbdbd] bg-[#f2f2f2]" dir="ltr">
		<div className="ms-[5px] h-px w-[9px] bg-[#aaa]" />
		<div className="ms-[99px] h-px w-1 bg-[#888]" />
		<div className="ms-[58px] h-px w-[11px] bg-[#444]" />
		<div className="ms-[22px] h-px w-3 bg-[#555]" />
		<div className="ms-[22px] h-px w-3 bg-[#555]" />
		<div className="ms-3 flex h-1 w-[33px] items-end justify-center bg-[#c4c4c4]">
			<div className="h-px w-3 bg-[#555]" />
		</div>
		<div className="ms-[47px] h-px w-[11px] bg-[#333]" />
		<div className="ms-[836px] h-px w-3 bg-[#555]" />
	</div>
);

export default function App() {
	return (
		<div
			dir="rtl"
			className="relative flex h-[720px] w-[1280px] flex-col overflow-hidden bg-black pt-[22px] font-['Open_Sans','DejaVu_Sans',sans-serif]"
		>
			<div className="relative flex h-[53px] shrink-0 flex-col bg-[#ad3c2b]">
				<div className="absolute left-[628px] top-0 h-[53px] w-[52px] bg-[#8c3124]" />
				<div className="relative -mt-0.5">
					<TitleBar />
				</div>
				<div className="relative mt-0.5">
					<Tabs />
				</div>
			</div>
			<Ribbon />

			<div className="flex h-[540px] shrink-0 bg-[#e6e6e6]">
				<div className="flex w-[188px] shrink-0 flex-col overflow-hidden pt-4">
					<Thumb number={4}><CreditSlide /></Thumb>
					<Thumb number={5}><ExampleSlide /></Thumb>
					<Thumb number={6} active><ReturnsSlide id="thumb" /></Thumb>
					<Thumb number={7}><DeliverySlide /></Thumb>
					<Thumb number={8}><Banner id="next" /></Thumb>
				</div>
				<div className="flex w-[14px] shrink-0 flex-col border-l border-[#c6c6c6] bg-[#dadada]">
					<ScrollButton up />
					<div className="mt-[120px] h-[160px] border border-[#cfcfcf] bg-white" />
					<div className="flex-1" />
					<ScrollButton />
				</div>
				<div className="flex w-[1078px] shrink-0 flex-col">
					<Workspace />
					<div className="flex h-[31px] items-center border-t border-[#bdbdbd] pb-1 ps-[11px]">
						<Fit className="w-[104px] text-[12px] leading-5 text-[#444]">انقر لإضافة ملاحظات</Fit>
					</div>
				</div>
			</div>
			<Statusbar />

			{/* vertical scrollbar of the editing area */}
			<div className="absolute left-0 top-[153px] flex h-[509px] w-[13px] flex-col bg-[#dfdfdf]">
				<ScrollButton up />
				<div className="mt-[168px] h-[34px] border border-[#cfcfcf] bg-white" />
				<div className="flex-1" />
				<ScrollButton />
				<svg viewBox="0 0 13 45" className="h-[45px] w-[13px] shrink-0 bg-[#e6e6e6] fill-[#555]">
					<path d="M3.500 7l3-3.500 3 3.500zM3.500 11l3-3.500 3 3.500zM3.500 18h6l-3 3.500zM3.500 22h6l-3 3.500z" />
				</svg>
			</div>

			<div className="absolute left-[64px] top-[639px] w-[188px] text-[#a8a8a8]">
				<Fit className="w-[116px] text-[17px] leading-6">تنشيط Windows</Fit>
				<Fit className="w-[188px] text-[12px] leading-4">انتقل إلى الإعدادت لتنشيط Windows.</Fit>
			</div>

			<div
				dir="ltr"
				className="absolute left-[542px] top-[25px] flex items-baseline font-['DejaVu_Sans',sans-serif] font-bold leading-[18px] text-[#f6ded8] [text-shadow:0_0_3px_#000,1px_1px_2px_#000]"
			>
				<Fit className="w-[43px] text-right text-[13px] [direction:rtl]">www</Fit>
				<span className="w-[5px] text-[13px]">.</span>
				<Fit className="w-[104px] text-[15px] [direction:rtl]">BANDICAM</Fit>
				<span className="w-[6px] text-[13px]">.</span>
				<Fit className="w-[36px] text-[11px] [direction:rtl]">COM</Fit>
			</div>

			<svg viewBox="0 0 40 32" className="absolute left-[35px] top-[58px] h-8 w-10 fill-white">
				<path d="M0 4c0-3 3-4 7-4h18l4 5 9-5v4L26 14l3 4H12l4-3L6 6v4H0z" opacity="0.500" />
				<path d="M10 19h6l5-3 6 3h5l6 7c1 3-2 4-4 4l-9-7H13l-4 4h17v3H5c-5 0-5-3-2-6z" opacity="0.900" />
			</svg>
		</div>
	);
}
